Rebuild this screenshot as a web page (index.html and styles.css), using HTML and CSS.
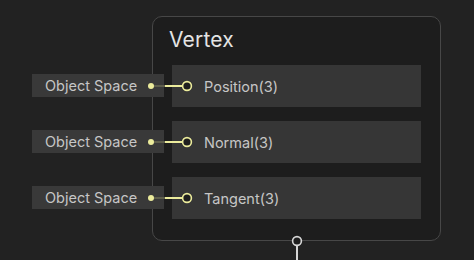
FILE: index.html
```html
<!DOCTYPE html>
<html>
<head>
<meta charset="utf-8">
<link rel="stylesheet" href="styles.css">
</head>
<body>
<div class="canvas">
  <div class="node">
    <div class="title">Vertex</div>
    <div class="ports">
      <div class="port">
        <div class="space">Object Space</div>
        <svg class="wire" width="52" height="12" viewBox="0 0 52 12"><circle cx="7" cy="6" r="3" fill="#ecec9c"/><line x1="10" y1="6" x2="21" y2="6" stroke="#5e5e4c" stroke-width="2"/><line x1="21" y1="6" x2="38.5" y2="6" stroke="#ecec9c" stroke-width="2"/><circle cx="43" cy="6" r="4.4" fill="#1e1e1e" stroke="#ecec9c" stroke-width="1.6"/></svg>
        <span class="label">Position(3)</span>
      </div>
      <div class="port">
        <div class="space">Object Space</div>
        <svg class="wire" width="52" height="12" viewBox="0 0 52 12"><circle cx="7" cy="6" r="3" fill="#ecec9c"/><line x1="10" y1="6" x2="21" y2="6" stroke="#5e5e4c" stroke-width="2"/><line x1="21" y1="6" x2="38.5" y2="6" stroke="#ecec9c" stroke-width="2"/><circle cx="43" cy="6" r="4.4" fill="#1e1e1e" stroke="#ecec9c" stroke-width="1.6"/></svg>
        <span class="label">Normal(3)</span>
      </div>
      <div class="port">
        <div class="space">Object Space</div>
        <svg class="wire" width="52" height="12" viewBox="0 0 52 12"><circle cx="7" cy="6" r="3" fill="#ecec9c"/><line x1="10" y1="6" x2="21" y2="6" stroke="#5e5e4c" stroke-width="2"/><line x1="21" y1="6" x2="38.5" y2="6" stroke="#ecec9c" stroke-width="2"/><circle cx="43" cy="6" r="4.4" fill="#1e1e1e" stroke="#ecec9c" stroke-width="1.6"/></svg>
        <span class="label">Tangent(3)</span>
      </div>
    </div>
    <svg class="out" width="14" height="30" viewBox="0 0 14 30"><line x1="7" y1="10" x2="7" y2="30" stroke="#d6d6d6" stroke-width="2"/><circle cx="7" cy="6" r="4.4" fill="#1e1e1e" stroke="#d6d6d6" stroke-width="1.6"/></svg>
  </div>
</div>
</body>
</html>
```
FILE: styles.css
```css
html, body {
  margin: 0;
  padding: 0;
  background: #222222;
  width: 474px;
  height: 260px;
  overflow: hidden;
  font-family: Inter, "Noto Sans", sans-serif;
}
.canvas {
  padding-top: 16px;
  padding-left: 152px;
}
.node {
  position: relative;
  box-sizing: border-box;
  width: 289px;
  height: 225px;
  border: 1.5px solid #474747;
  border-radius: 10px;
  background: #1d1d1d;
  padding: 10px 0 0 19px;
}
.title {
  font-size: 21px;
  line-height: 26px;
  color: #e4e4e4;
  padding-left: -3px;
  margin-left: -3px;
  margin-bottom: 12px;
  letter-spacing: 0.2px;
}
.ports {
  display: flex;
  flex-direction: column;
  gap: 14px;
}
.port {
  position: relative;
  width: 249px;
  height: 42px;
  background: #363636;
  display: flex;
  align-items: center;
  padding-left: 32px;
  box-sizing: border-box;
}
.label {
  font-size: 14.5px;
  color: #c6c6c6;
}
.space {
  position: absolute;
  right: calc(100% + 8px);
  top: 9px;
  width: 132px;
  height: 23px;
  box-sizing: border-box;
  padding-left: 13px;
  background: #393939;
  color: #c6c6c6;
  font-size: 14.5px;
  line-height: 23px;
}
.wire {
  position: absolute;
  left: -28px;
  top: 15px;
}
.out {
  position: absolute;
  left: 50%;
  margin-left: -7px;
  bottom: -25px;
}
```
